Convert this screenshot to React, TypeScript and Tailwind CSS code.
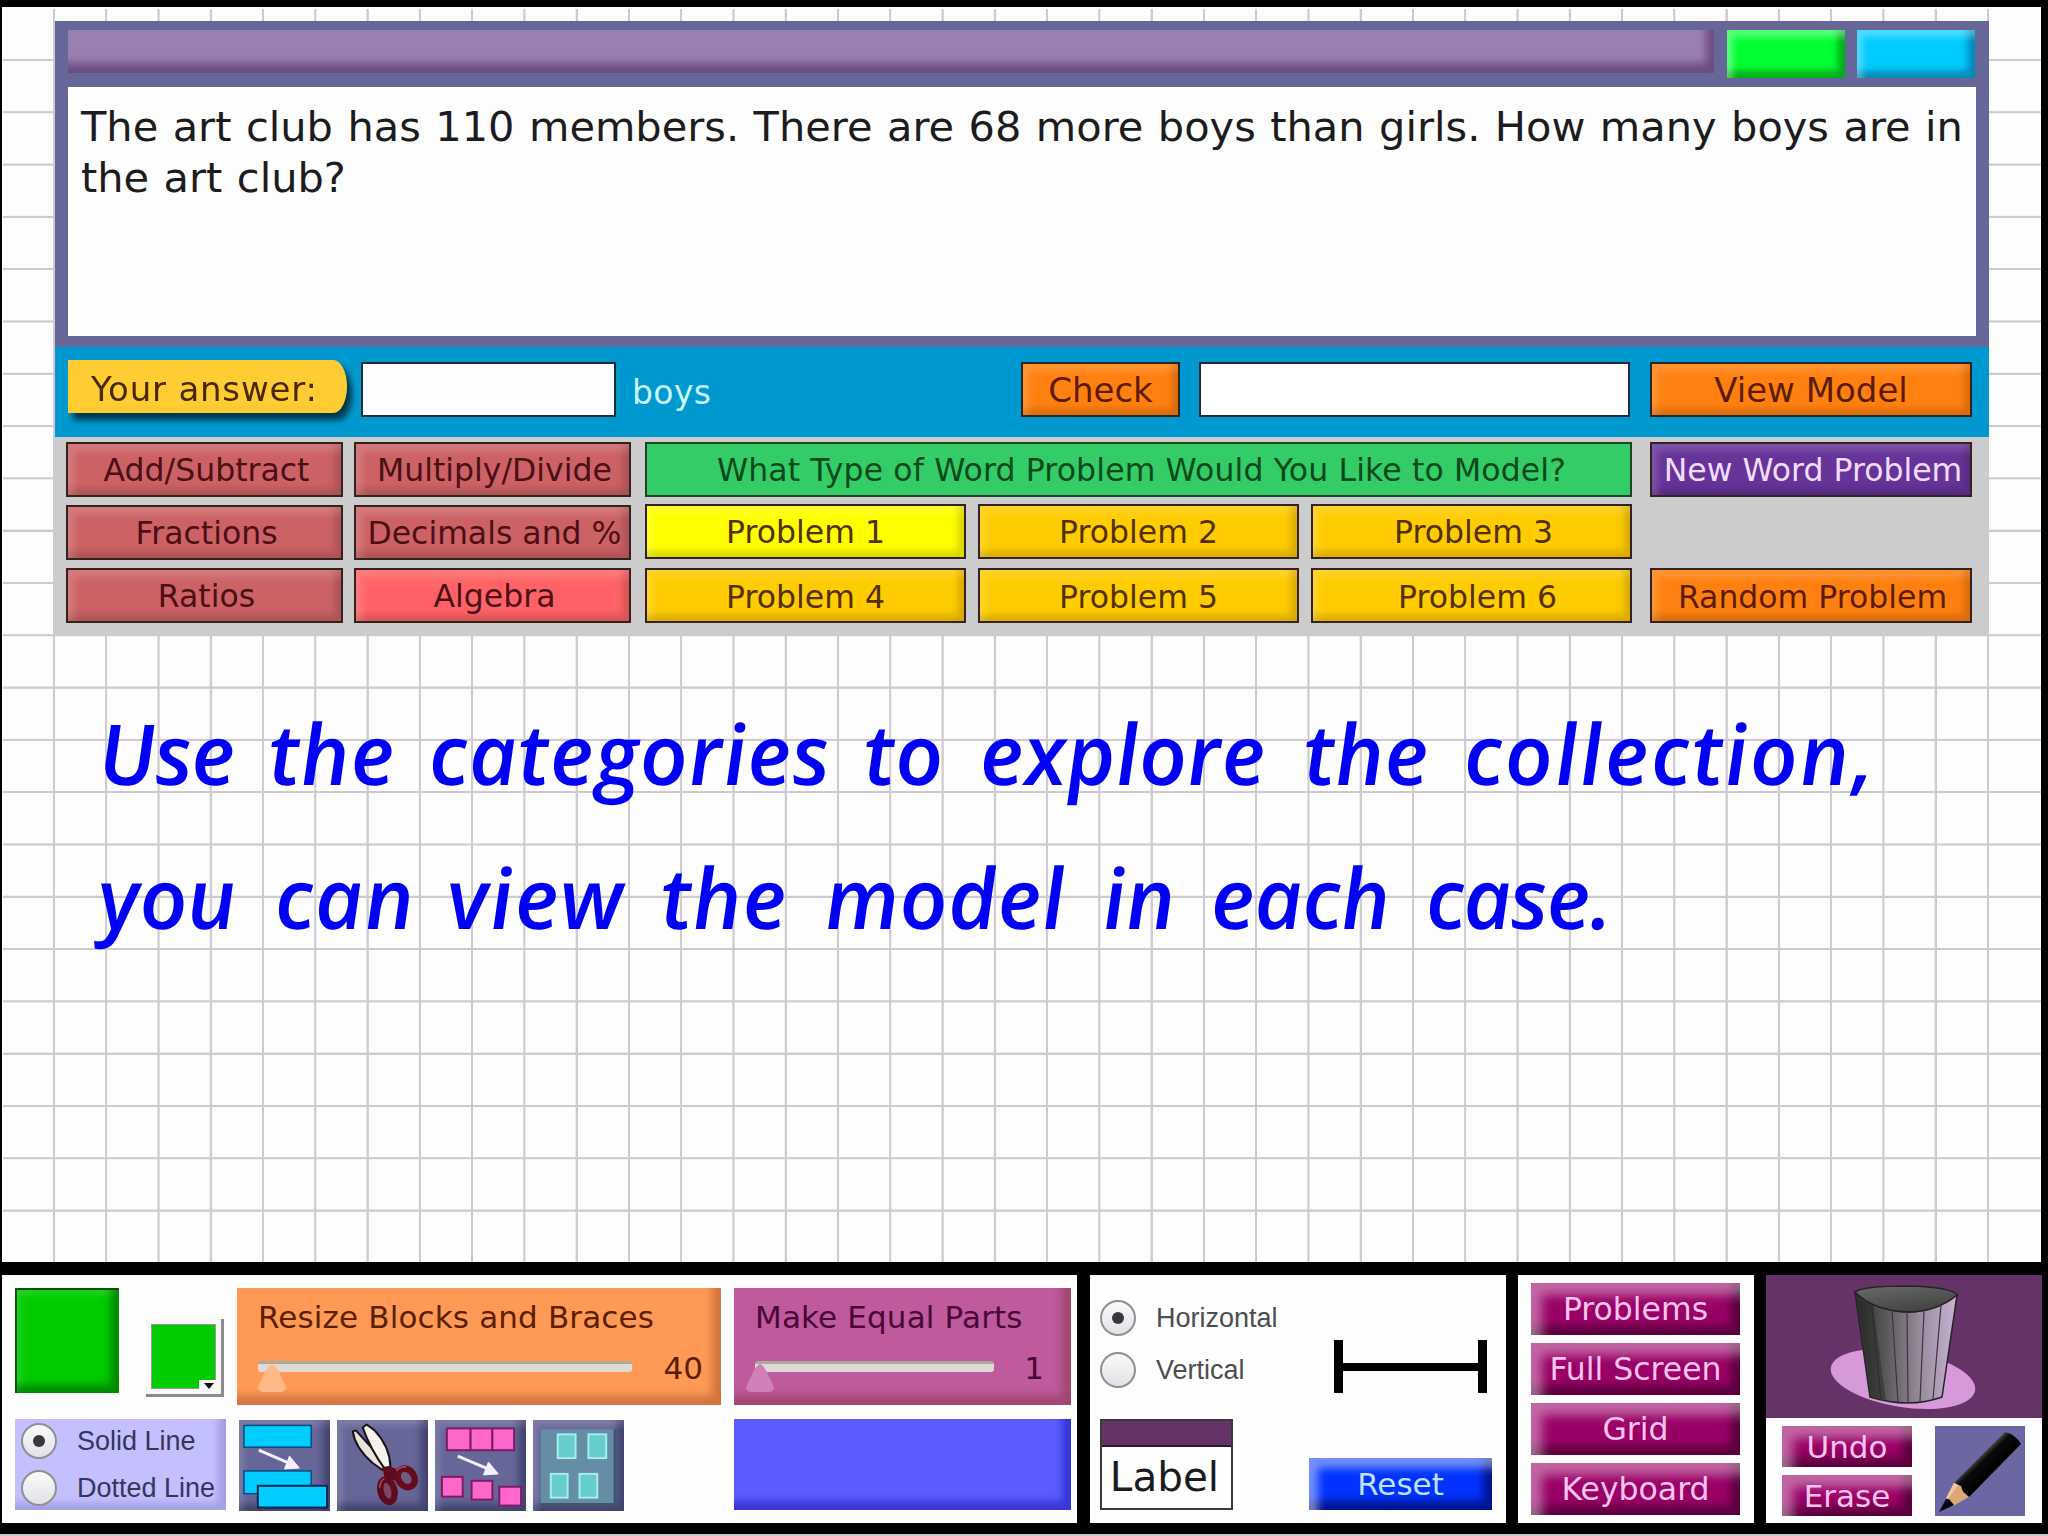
import { useState } from "react"
import type { ReactNode } from "react"
import clsx from "clsx"

const categories = ["Add/Subtract", "Multiply/Divide", "Fractions", "Decimals and %", "Ratios", "Algebra"]
const problems = [1, 2, 3, 4, 5, 6]

// each word gets its own slot so the hand lettering keeps its loose rhythm
const noteLines = [
  [
    { text: "Use", slot: "w-[170px] tracking-[-1.5px]" },
    { text: "the", slot: "w-[160px] tracking-[0.5px]" },
    { text: "categories", slot: "w-[435px] tracking-[0.6px]" },
    { text: "to", slot: "w-[116px] tracking-[0.5px]" },
    { text: "explore", slot: "w-[324px] tracking-[0px]" },
    { text: "the", slot: "w-[160px] tracking-[0px]" },
    { text: "collection,", slot: "w-[440px] tracking-[1.8px]" },
  ],
  [
    { text: "you", slot: "w-[176px] tracking-[-0.5px]" },
    { text: "can", slot: "w-[173px] tracking-[0.8px]" },
    { text: "view", slot: "w-[213px] tracking-[1.5px]" },
    { text: "the", slot: "w-[164px] tracking-[0.5px]" },
    { text: "model", slot: "w-[278px] tracking-[0.2px]" },
    { text: "in", slot: "w-[108px] tracking-[0px]" },
    { text: "each", slot: "w-[215px] tracking-[-0.8px]" },
    { text: "case.", slot: "w-[220px] tracking-[-1.8px]" },
  ],
]

const softBevel =
  "shadow-[inset_6px_7px_7px_rgba(255,255,255,0.16),inset_-6px_-6px_7px_rgba(0,0,0,0.16)]"

function BoxButton({ className, onClick, children }: { className?: string; onClick?: () => void; children?: ReactNode }) {
  return (
    <button
      onClick={onClick}
      className={clsx(
        "flex items-center justify-center whitespace-nowrap border-2 border-[#33231c] pt-[2px] text-[31.5px] leading-none",
        softBevel,
        className,
      )}
    >
      {children}
    </button>
  )
}

function GlossButton({ className, children }: { className?: string; children: ReactNode }) {
  return (
    <button
      className={clsx(
        "flex items-center justify-center whitespace-nowrap bg-[#990066] pt-px leading-none text-[#ffc4ee]",
        "shadow-[inset_11px_12px_11px_rgba(255,255,255,0.4),inset_-9px_-9px_9px_rgba(50,0,35,0.6)]",
        className,
      )}
    >
      {children}
    </button>
  )
}

function Radio({ label, checked, onClick, tone }: { label: string; checked: boolean; onClick: () => void; tone: string }) {
  return (
    <button onClick={onClick} className={clsx("flex items-center gap-[20px] font-['Liberation_Sans',sans-serif] text-[27px] leading-none", tone)}>
      <span className="flex size-[36px] items-center justify-center rounded-full border-2 border-[#8f8f95] bg-linear-to-b from-[#fafafa] to-[#e2e2e6]">
        {checked && <span className="size-[12px] rounded-full bg-[#38383c]" />}
      </span>
      <span className="whitespace-nowrap">{label}</span>
    </button>
  )
}

function Slider({ title, value, className, track, thumb }: { title: string; value: number; className: string; track: string; thumb: string }) {
  return (
    <div
      className={clsx(
        "flex h-[117px] flex-col pt-[13px] text-[31px] leading-none",
        "shadow-[inset_-9px_-9px_8px_rgba(90,20,0,0.28)]",
        className,
      )}
    >
      <div className="h-[48px] whitespace-nowrap pt-[1px] tracking-[0.15px]">{title}</div>
      <div className="flex items-center justify-between">
        <div className={clsx("relative h-[11px] rounded-[3px] border-t-[3px] border-[#8a8a70]/60 bg-[#dedbd6]", track)}>
          <svg viewBox="0 0 28 28" className={clsx("absolute top-0 size-[28px]", thumb)}>
            <path d="M14 0 Q18 2 21 8 L28 23 Q28 28 22 28 H6 Q0 28 0 23 L7 8 Q10 2 14 0Z" fill="currentColor" />
          </svg>
        </div>
        <span className="pt-[4px]">{value}</span>
      </div>
    </div>
  )
}

function Arrow({ x, y }: { x: number; y: number }) {
  return (
    <g transform={`translate(${x} ${y})`} stroke="#f4efff" fill="#f4efff">
      <path d="M0 0 L33 14" strokeWidth="3" />
      <path d="M31 6 L41 18 L26 19 Z" strokeWidth="1" />
    </g>
  )
}

function CopyIcon() {
  return (
    <svg viewBox="0 0 92 91" className="size-full">
      <g fill="#00ccff" stroke="#0b4a80" strokeWidth="1.5">
        <rect x="5" y="5" width="68" height="22" />
        <rect x="5" y="51" width="68" height="23" />
        <rect x="19" y="66" width="70" height="22" stroke="#06284f" strokeWidth="2" />
      </g>
      <Arrow x={20} y={30} />
    </svg>
  )
}

function ScissorsIcon() {
  return (
    <svg viewBox="0 0 92 91" className="size-full">
      <g stroke="#1c1018" strokeWidth="2" strokeLinejoin="round">
        <path d="M16 11 L19 10 L50 44 L46 50 L36 43 Q18 27 16 11Z" fill="#e6e6da" />
        <path d="M26 7 L30 4 L38 10 Q53 26 54 46 L49 50 Q33 28 26 7Z" fill="#f4f4ea" />
      </g>
      <path d="M46 47 L53 46 L62 50 L59 61 L48 58Z" fill="#5e0b1e" />
      <ellipse cx="51" cy="71" rx="7" ry="11.5" fill="#7a4862" stroke="#5e0b1e" strokeWidth="6.5" transform="rotate(-14 51 71)" />
      <ellipse cx="70" cy="58" rx="8" ry="10" fill="#705b85" stroke="#650b1e" strokeWidth="6.5" transform="rotate(-35 70 58)" />
      <path d="M60 51 q5 -5 10 -4 M43 68 q1 -8 5 -9" fill="none" stroke="#b04a5c" strokeWidth="1.5" />
    </svg>
  )
}

function SplitIcon() {
  return (
    <svg viewBox="0 0 92 91" className="size-full">
      <g fill="#ff66cc" stroke="#7a1d66" strokeWidth="2">
        <rect x="12" y="8" width="24" height="22" />
        <rect x="36" y="8" width="22" height="22" />
        <rect x="58" y="8" width="22" height="22" />
        <rect x="7" y="57" width="21" height="20" />
        <rect x="37" y="61" width="21" height="19" />
        <rect x="65" y="67" width="22" height="19" />
      </g>
      <Arrow x={23} y={36} />
    </svg>
  )
}

function PartsIcon() {
  return (
    <svg viewBox="0 0 92 91" className="size-full">
      <rect x="8" y="9" width="75" height="76" fill="#668da6" />
      <path d="M8 85 H83 V9" fill="none" stroke="#3f5470" strokeWidth="3" />
      <g fill="#66cccc" stroke="#a5eeee" strokeWidth="2">
        <rect x="25" y="14" width="18" height="24" />
        <rect x="56" y="14" width="18" height="24" />
        <rect x="18" y="54" width="17" height="24" />
        <rect x="47" y="54" width="18" height="24" />
      </g>
    </svg>
  )
}

function TrashIcon() {
  return (
    <svg viewBox="0 0 276 143" className="h-[143px] w-[276px]">
      <defs>
        <linearGradient id="can" x1="0" x2="1">
          <stop offset="0" stopColor="#2e2e2e" />
          <stop offset="0.3" stopColor="#5a585a" />
          <stop offset="0.65" stopColor="#9a8c9f" />
          <stop offset="1" stopColor="#c9b3d2" />
        </linearGradient>
        <linearGradient id="mouth" x1="0" x2="0.5" y1="0" y2="1">
          <stop offset="0" stopColor="#6a6a6a" />
          <stop offset="1" stopColor="#444444" />
        </linearGradient>
      </defs>
      <ellipse cx="137" cy="104" rx="73" ry="28" fill="#d699d9" transform="rotate(9 137 104)" />
      <path d="M89 17 L104 122 Q143 134 176 122 L191 20 Q170 37 142 37 Q108 36 89 17Z" fill="url(#can)" stroke="#262226" strokeWidth="1.5" />
      <path d="M89 17 Q96 11 142 11 Q186 12 191 20 Q170 37 142 37 Q108 36 89 17Z" fill="url(#mouth)" stroke="#262226" strokeWidth="1.5" />
      <path d="M106 30 L115 125 M126 36 L132 127 M141 37 L142 127 M158 36 L154 126 M175 30 L167 124" fill="none" stroke="#3b363d" strokeWidth="1.2" />
      <path d="M92 24 L105 121 L120 125 L107 30Z" fill="#1e1e1e" opacity="0.35" />
    </svg>
  )
}

function PencilIcon() {
  return (
    <svg viewBox="0 0 90 90" className="size-full">
      <defs>
        <linearGradient id="barrel" x1="0.35" y1="0.35" x2="0.6" y2="0.6">
          <stop offset="0" stopColor="#6a6a5c" />
          <stop offset="0.35" stopColor="#0b0b0b" />
          <stop offset="1" stopColor="#000000" />
        </linearGradient>
      </defs>
      <path d="M19 57 L70 6 Q80 8 86 18 L34 71Z" fill="url(#barrel)" />
      <path d="M19 57 L26 60 L28 66 L34 71 L18 80 L11 74Z" fill="#dba878" />
      <path d="M19 57 L23 59 L13 73 L11 72Z" fill="#f0c8a0" />
      <path d="M11 73 L14 73 L19 79 L4 86Z" fill="#07071a" />
    </svg>
  )
}

export default function App() {
  const [category, setCategory] = useState("Algebra")
  const [problem, setProblem] = useState(1)
  const [solid, setSolid] = useState(true)
  const [horizontal, setHorizontal] = useState(true)

  return (
    <div className="flex h-[1536px] w-[2048px] flex-col overflow-hidden bg-black font-['DejaVu_Sans',Verdana,sans-serif]">
      <div className="mr-[7px] ml-[2px] mt-[7px] flex h-[1255px] flex-col bg-[#fdfdfe] bg-[image:repeating-linear-gradient(to_right,transparent_0,transparent_49.5px,#cdcbd0_50.3px,#cdcbd0_51.8px,transparent_52.27px),repeating-linear-gradient(to_bottom,transparent_0,transparent_49.5px,#cdcbd0_50.3px,#cdcbd0_51.8px,transparent_52.3px)] bg-[position:1px_2px] bg-[size:2010px_100%,100%_100%] bg-no-repeat">
        <main className="mt-[14px] ml-[53px] flex w-[1934px] flex-col">
          <section className="flex h-[326px] flex-col bg-[#666699] px-[13px] pt-[9px]">
            <div className="flex h-[57px] items-start">
              <div className="mr-[13px] h-[43px] w-[1646px] bg-[#9980b3] shadow-[inset_-8px_-10px_8px_rgba(80,40,100,0.6)]" />
              <button className="mr-[12px] h-[48px] w-[118px] bg-[#00ff33] shadow-[inset_6px_7px_6px_rgba(255,255,255,0.35),inset_-7px_-7px_7px_rgba(0,90,0,0.5)]" />
              <button className="h-[48px] w-[118px] bg-[#00ccff] shadow-[inset_6px_7px_6px_rgba(255,255,255,0.3),inset_-7px_-7px_7px_rgba(0,70,110,0.5)]" />
            </div>
            <p className="h-[249px] whitespace-nowrap bg-[#fdfdfd] pt-[15px] pl-[13px] text-[41.5px] leading-[50.5px] [word-spacing:1.3px] text-[#1c1c1e]">
              The art club has 110 members. There are 68 more boys than girls. How many boys are in
              <br />
              the art club?
            </p>
          </section>

          <section className="flex h-[90px] items-start bg-[#0099cf] pl-[13px] pt-[13px] leading-none">
            <div className="h-[53px] w-[279px] drop-shadow-[5px_7px_3px_rgba(0,20,30,0.75)]">
              <div className="flex size-full items-center rounded-r-[14px_27px] bg-[#ffcc33] pt-[4px] pl-[23px] text-[34px] tracking-[0.8px] text-[#4a2800]">
                Your answer:
              </div>
            </div>
            <div className="mt-[2px] ml-[14px] h-[55px] w-[255px] border-2 border-[#1b2c3a] bg-[#fdfdff]" />
            <div className="mt-[16px] ml-[16px] w-[389px] text-[33px] tracking-[0.4px] text-[#c9f6ff]">boys</div>
            <BoxButton className="mt-[2px] h-[55px] w-[159px] bg-[#ff8010] !pt-0 !text-[34px] text-[#5c1c00]">Check</BoxButton>
            <div className="mt-[2px] ml-[19px] h-[55px] w-[431px] border-2 border-[#1b2c3a] bg-white" />
            <BoxButton className="mt-[2px] ml-[20px] h-[55px] w-[322px] bg-[#ff8010] !pt-0 !text-[34px] text-[#5c1c00]">View Model</BoxButton>
          </section>

          <section className="flex h-[199px] gap-[14px] bg-[#cccccc] pt-[5px] pl-[11px]">
            <div className="grid h-[181px] grid-cols-[277px_277px] grid-rows-[55px_55px_55px] gap-x-[11px] gap-y-[8px]">
              {categories.map((name) => (
                <BoxButton
                  key={name}
                  onClick={() => setCategory(name)}
                  className={clsx("pl-[4px] text-[#4d0f16]", category === name ? "bg-[#ff6366]" : "bg-[#cc6266]")}
                >
                  {name}
                </BoxButton>
              ))}
            </div>
            <div className="grid h-[181px] grid-cols-[321px_321px_321px] grid-rows-[55px_55px_55px] gap-x-[12px] gap-y-[8px]">
              <div className="col-span-3 flex items-center justify-center whitespace-nowrap border-2 border-[#1d4427] bg-[#33cc66] pt-[2px] pl-[6px] text-[31.5px] leading-none tracking-[0.13px] text-[#084a1b]">
                What Type of Word Problem Would You Like to Model?
              </div>
              {problems.map((n) => (
                <BoxButton
                  key={n}
                  onClick={() => setProblem(n)}
                  className={clsx(
                    "text-[#543000]",
                    problem === n ? "bg-[#ffff00]" : "bg-[#ffcc00]",
                    n <= 3 ? "-mt-px mb-px" : "pt-[4px]",
                    n === 3 && "pl-[4px]",
                    n === 6 && "pl-[12px]",
                  )}
                >
                  Problem {n}
                </BoxButton>
              ))}
            </div>
            <div className="ml-[4px] flex h-[181px] w-[322px] flex-col justify-between">
              <BoxButton className="h-[55px] bg-[#663399] pl-[4px] text-[#f1dcff]">New Word Problem</BoxButton>
              <BoxButton className="h-[55px] bg-[#ff8010] pt-[4px] pl-[3px] text-[#5c1c00]">Random Problem</BoxButton>
            </div>
          </section>
        </main>

        <div className="mt-[45px] ml-[96px] font-['Open_Sans','Noto_Sans',sans-serif] text-[84px] font-semibold italic leading-[144px] text-[#0000f5]">
          {noteLines.map((line, i) => (
            <div key={i} className="flex">
              {line.map((word, j) => (
                <span key={j} className={clsx("shrink-0 skew-x-[4deg] whitespace-nowrap", word.slot)}>
                  {word.text}
                </span>
              ))}
            </div>
          ))}
        </div>
      </div>

      <footer className="mt-[13px] ml-[2px] flex h-[248px] shrink-0 gap-[13px]">
        <section className="flex w-[1075px] shrink-0 flex-col gap-[14px] bg-[#fefefe] pt-[13px] pl-[13px]">
          <div className="flex">
            <div className="h-[105px] w-[104px] border-t-2 border-l-2 border-[#055505] bg-[#00cc00] shadow-[inset_-8px_-8px_8px_rgba(0,70,0,0.5),inset_5px_5px_6px_rgba(255,255,255,0.12)]" />
            <div className="mt-[31px] ml-[27px] flex h-[78px] w-[78px] items-center justify-center border-r-[3px] border-b-[3px] border-[#8c8c8c] bg-[#f7f7f7]">
              <div className="flex size-[65px] items-end justify-end border border-[#999999] bg-[#00cc00]">
                <svg viewBox="0 0 18 10" className="-mr-[2px] -mb-[2px] h-[10px] w-[18px] bg-[#f7f7f7]">
                  <path d="M5 3 H15 L10 9Z" fill="#111111" />
                </svg>
              </div>
            </div>
            <Slider title="Resize Blocks and Braces" value={40} className="ml-[13px] w-[484px] bg-[#ff9955] pl-[21px] pr-[18px] text-[#5a2000]" track="w-[374px]" thumb="left-0 text-[#ffb888]" />
            <Slider title="Make Equal Parts" value={1} className="ml-[13px] w-[337px] bg-[#bf5a9c] pl-[21px] pr-[27px] text-[#4a0638]" track="w-[239px]" thumb="-left-[9px] text-[#d07fb8]" />
          </div>
          <div className="flex">
            <div className="flex h-[91px] w-[211px] flex-col justify-center gap-[11px] bg-[#c4bfff] pl-[6px] shadow-[inset_-8px_-7px_7px_rgba(110,100,180,0.35)]">
              <Radio label="Solid Line" checked={solid} onClick={() => setSolid(true)} tone="text-[#37365a]" />
              <Radio label="Dotted Line" checked={!solid} onClick={() => setSolid(false)} tone="text-[#37365a]" />
            </div>
            <div className="mt-[1px] ml-[13px] flex gap-[7px]">
              {[CopyIcon, ScissorsIcon, SplitIcon, PartsIcon].map((Icon, i) => (
                <button key={i} className="h-[91px] w-[91px] bg-[#666699] shadow-[inset_5px_6px_6px_rgba(255,255,255,0.14),inset_-7px_-7px_7px_rgba(25,25,60,0.45)]">
                  <Icon />
                </button>
              ))}
            </div>
            <div className="ml-[110px] h-[91px] w-[337px] bg-[#5c5bff] shadow-[inset_-9px_-9px_7px_rgba(20,20,180,0.5)]" />
          </div>
        </section>

        <section className="flex w-[416px] shrink-0 justify-between bg-[#fefefe] pl-[10px] pr-[14px]">
          <div className="flex flex-col pt-[25px]">
            <div className="flex flex-col gap-[16px]">
              <Radio label="Horizontal" checked={horizontal} onClick={() => setHorizontal(true)} tone="text-[#4c4c50]" />
              <Radio label="Vertical" checked={!horizontal} onClick={() => setHorizontal(false)} tone="text-[#4c4c50]" />
            </div>
            <div className="mt-[31px] flex h-[91px] w-[133px] flex-col border-2 border-[#3a3a3a]">
              <div className="h-[26px] border-b-2 border-[#2a1a2a] bg-[#663366]" />
              <div className="flex grow items-center justify-center pr-[4px] text-[40.5px] leading-none text-[#1c1c1e]">Label</div>
            </div>
          </div>
          <div className="flex flex-col items-end pt-[65px]">
            <div className="mr-[5px] flex h-[53px] w-[153px] items-center">
              <div className="h-full w-[9px] bg-black" />
              <div className="h-[8px] grow bg-black" />
              <div className="h-full w-[9px] bg-black" />
            </div>
            <button className="mt-[65px] flex h-[52px] w-[183px] items-center justify-center bg-[#0033ff] pt-px text-[31px] leading-none text-[#bfe0ff] shadow-[inset_9px_10px_9px_rgba(255,255,255,0.45),inset_-9px_-9px_9px_rgba(0,0,70,0.6)]">
              Reset
            </button>
          </div>
        </section>

        <section className="-ml-px flex w-[236px] shrink-0 flex-col gap-[8px] bg-[#fefefe] pt-[8px] pl-[13px]">
          {["Problems", "Full Screen", "Grid", "Keyboard"].map((name) => (
            <GlossButton key={name} className="h-[52px] w-[209px] text-[31.5px]">
              {name}
            </GlossButton>
          ))}
        </section>

        <section className="-ml-px flex w-[276px] shrink-0 flex-col bg-[#fefefe]">
          <div className="h-[143px] bg-[#663369]">
            <TrashIcon />
          </div>
          <div className="flex pt-[8px] pl-[16px]">
            <div className="flex flex-col gap-[8px]">
              <GlossButton className="h-[41px] w-[130px] text-[31px]">Undo</GlossButton>
              <GlossButton className="h-[41px] w-[130px] text-[31px]">Erase</GlossButton>
            </div>
            <button className="ml-[23px] size-[90px] bg-[#6b67a3]">
              <PencilIcon />
            </button>
          </div>
        </section>
      </footer>
      <div className="mt-[11px] h-[2px] shrink-0 bg-[#c8c8c8]" />
    </div>
  )
}
